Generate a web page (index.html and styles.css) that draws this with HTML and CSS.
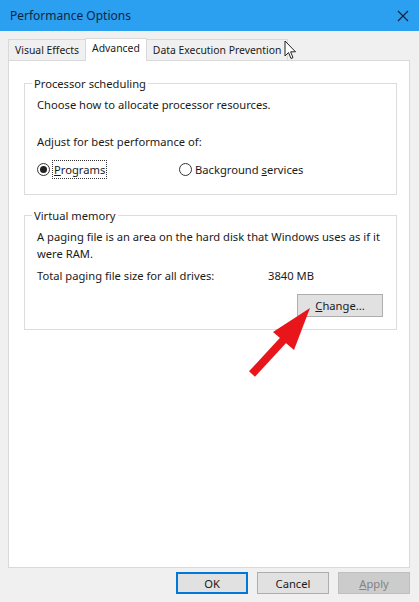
FILE: index.html
```html
<!DOCTYPE html>
<html lang="en">
<head>
  <meta charset="UTF-8" />
  <title>Performance Options</title>
  <link rel="stylesheet" href="styles.css">
</head>
<body>
  <div class="window">
    <div class="titlebar">
      <span class="title">Performance Options</span>
      <svg class="close" width="12" height="12" viewBox="0 0 12 12"><path d="M1 1L11 11M11 1L1 11" stroke="#0d2440" stroke-width="1.2" fill="none"/></svg>
    </div>

    <div class="tabs">
      <div class="tab">Visual Effects</div>
      <div class="tab active">Advanced</div>
      <div class="tab">Data Execution Prevention</div>
      <svg class="cursor" width="14" height="20" viewBox="0 0 14 20"><path d="M1 1L1 16L4.5 12.5L7 18.5L9 17.6L6.6 11.8L11.5 11.8Z" fill="#fff" stroke="#222" stroke-width="1"/></svg>
    </div>

    <div class="panel">
      <fieldset class="group">
        <legend>Processor scheduling</legend>
        <p>Choose how to allocate processor resources.</p>
        <p class="gap">Adjust for best performance of:</p>
        <div class="radios">
          <label class="radio"><span class="dot checked"></span><span class="focus"><u>P</u>rograms</span></label>
          <label class="radio"><span class="dot"></span><span>Background <u>s</u>ervices</span></label>
        </div>
      </fieldset>

      <fieldset class="group vm">
        <legend>Virtual memory</legend>
        <p>A paging file is an area on the hard disk that Windows uses as if it were RAM.</p>
        <div class="row">
          <span class="label">Total paging file size for all drives:</span>
          <span>3840 MB</span>
        </div>
        <div class="change-row">
          <button class="btn change"><u>C</u>hange...</button>
        </div>
      </fieldset>

      <svg class="arrow" width="80" height="90" viewBox="0 0 80 90">
        <path d="M4 71L40 32" stroke="#e8161a" stroke-width="8" fill="none"/>
        <path d="M62 5L25 29L46 47Z" fill="#e8161a"/>
      </svg>
    </div>

    <div class="buttons">
      <button class="btn default">OK</button>
      <button class="btn">Cancel</button>
      <button class="btn disabled"><u>A</u>pply</button>
    </div>
  </div>
</body>
</html>
```

FILE: styles.css
```css
body {
  margin: 0;
  font-family: "Noto Sans", "Open Sans", sans-serif;
  font-size: 11.2px;
  color: #1a1a1a;
  background: #f0f0f0;
}
.window {
  width: 419px;
  height: 602px;
  background: #f0f0f0;
  display: flex;
  flex-direction: column;
}
.titlebar {
  height: 31px;
  background: #2b9ff0;
  display: flex;
  align-items: center;
  justify-content: space-between;
  padding: 0 10px;
  box-sizing: border-box;
}
.title {
  color: #10263f;
  font-size: 12px;
}
.tabs {
  display: flex;
  align-items: flex-end;
  margin: 7px 0 0 8px;
  height: 22px;
  position: relative;
  font-size: 10.4px;
}
.tab {
  height: 20px;
  line-height: 20px;
  padding: 0 6px;
  border: 1px solid #d9d9d9;
  border-bottom: none;
  background: #f0f0f0;
  margin-right: -1px;
}
.tab.active {
  height: 22px;
  line-height: 18px;
  background: #fff;
  position: relative;
  z-index: 1;
  margin-bottom: -1px;
  padding: 0 6px;
}
.cursor {
  position: absolute;
  left: 276px;
  top: 2px;
}
.panel {
  position: relative;
  box-sizing: border-box;
  margin: 0 9px 0 8px;
  height: 508px;
  background: #fff;
  border: 1px solid #d9d9d9;
  padding: 14px 12px 0 15px;
}
.group {
  margin: 0;
  border: 1px solid #dcdcdc;
  padding: 1px 12px 12px 12px;
  line-height: 17px;
}
.group legend {
  padding: 0 2px;
  margin-left: -5px;
}
.group p {
  margin: 3px 0 0 0;
}
.group p.gap {
  margin-top: 20px;
}
.radios {
  display: flex;
  margin-top: 11px;
  padding-bottom: 4px;
}
.radio {
  display: flex;
  align-items: center;
  width: 142px;
}
.dot {
  width: 11px;
  height: 11px;
  border: 1px solid #333;
  border-radius: 50%;
  margin-right: 3px;
  display: flex;
  align-items: center;
  justify-content: center;
}
.dot.checked::after {
  content: "";
  width: 7px;
  height: 7px;
  border-radius: 50%;
  background: #222;
}
.focus {
  outline: 1px dotted #333;
  padding: 0 1px;
}
.vm {
  margin-top: 12px;
  padding-bottom: 12px;
}
.row {
  display: flex;
  margin-top: 5px;
}
.row .label {
  width: 231px;
}
.change-row {
  display: flex;
  justify-content: flex-end;
  margin-top: 10px;
  padding-right: 1px;
}
.btn {
  font-family: inherit;
  font-size: 11.2px;
  color: #1a1a1a;
  background: #e1e1e1;
  border: 1px solid #adadad;
  width: 72px;
  height: 22px;
  padding: 0;
}
.change {
  width: 86px;
  height: 23px;
}
.arrow {
  position: absolute;
  left: 239px;
  top: 242px;
}
.buttons {
  display: flex;
  justify-content: flex-end;
  gap: 9px;
  padding: 4px 9px 0 0;
}
.btn.default {
  border: 2px solid #0078d7;
}
.btn.disabled {
  background: #cccccc;
  border-color: #bfbfbf;
  color: #838383;
}
```
